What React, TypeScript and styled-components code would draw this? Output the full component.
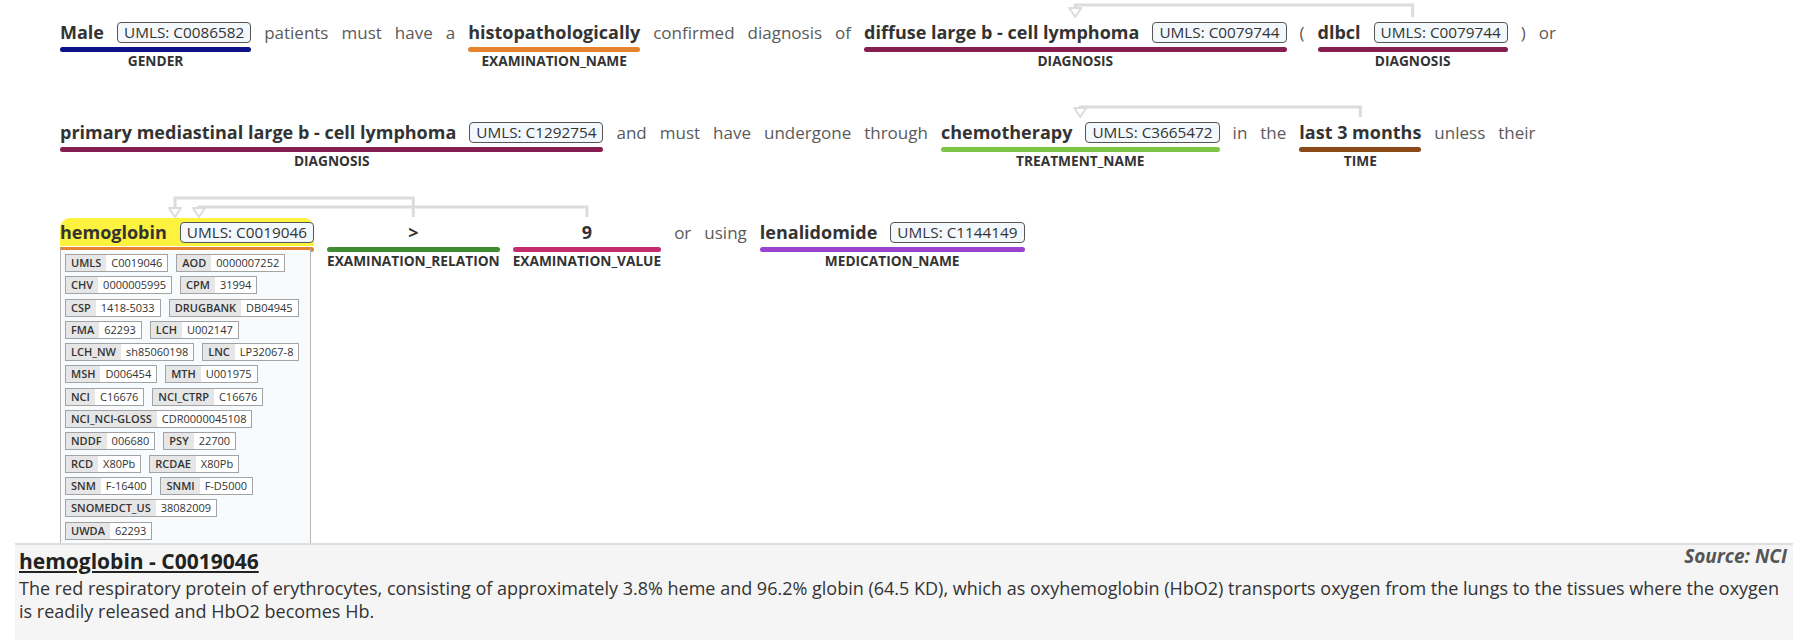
import { FC, Fragment, useLayoutEffect, useRef, useState } from 'react';
import styled, { createGlobalStyle } from 'styled-components';

type EntityToken = {
  id?: string;
  text: string;
  code?: string;
  label: string;
  color: string;
  selected?: boolean;
};

type Token = string | EntityToken;

type Relation = { from: string; to: string; rise: number; offset: number };

type Arc = { x1: number; x2: number; top: number; bottom: number };

const ORANGE = '#e5832e';
const MAROON = '#861f50';

const LINES: Token[][] = [
  [
    { text: 'Male', code: 'C0086582', label: 'GENDER', color: '#0c1388' },
    'patients',
    'must',
    'have',
    'a',
    { text: 'histopathologically', label: 'EXAMINATION_NAME', color: ORANGE },
    'confirmed',
    'diagnosis',
    'of',
    {
      id: 'dlbclFull',
      text: 'diffuse large b - cell lymphoma',
      code: 'C0079744',
      label: 'DIAGNOSIS',
      color: MAROON,
    },
    '(',
    { id: 'dlbcl', text: 'dlbcl', code: 'C0079744', label: 'DIAGNOSIS', color: MAROON },
    ')',
    'or',
  ],
  [
    {
      text: 'primary mediastinal large b - cell lymphoma',
      code: 'C1292754',
      label: 'DIAGNOSIS',
      color: MAROON,
    },
    'and',
    'must',
    'have',
    'undergone',
    'through',
    { id: 'chemo', text: 'chemotherapy', code: 'C3665472', label: 'TREATMENT_NAME', color: '#7ec446' },
    'in',
    'the',
    { id: 'last3', text: 'last 3 months', label: 'TIME', color: '#8b4a17' },
    'unless',
    'their',
  ],
  [
    {
      id: 'hemo',
      text: 'hemoglobin',
      code: 'C0019046',
      label: 'EXAMINATION_NAME',
      color: ORANGE,
      selected: true,
    },
    { id: 'gt', text: '>', label: 'EXAMINATION_RELATION', color: '#3e8e2f' },
    { id: 'nine', text: '9', label: 'EXAMINATION_VALUE', color: '#c52b6f' },
    'or',
    'using',
    { text: 'lenalidomide', code: 'C1144149', label: 'MEDICATION_NAME', color: '#9b43cf' },
  ],
];

const RELATIONS: Relation[] = [
  { from: 'dlbcl', to: 'dlbclFull', rise: 17, offset: 0 },
  { from: 'last3', to: 'chemo', rise: 15, offset: 0 },
  { from: 'gt', to: 'hemo', rise: 24, offset: -12 },
  { from: 'nine', to: 'hemo', rise: 15, offset: 12 },
];

const CODES: [string, string][] = [
  ['UMLS', 'C0019046'],
  ['AOD', '0000007252'],
  ['CHV', '0000005995'],
  ['CPM', '31994'],
  ['CSP', '1418-5033'],
  ['DRUGBANK', 'DB04945'],
  ['FMA', '62293'],
  ['LCH', 'U002147'],
  ['LCH_NW', 'sh85060198'],
  ['LNC', 'LP32067-8'],
  ['MSH', 'D006454'],
  ['MTH', 'U001975'],
  ['NCI', 'C16676'],
  ['NCI_CTRP', 'C16676'],
  ['NCI_NCI-GLOSS', 'CDR0000045108'],
  ['NDDF', '006680'],
  ['PSY', '22700'],
  ['RCD', 'X80Pb'],
  ['RCDAE', 'X80Pb'],
  ['SNM', 'F-16400'],
  ['SNMI', 'F-D5000'],
  ['SNOMEDCT_US', '38082009'],
  ['UWDA', '62293'],
];

const App: FC = () => {
  const areaRef = useRef<HTMLDivElement>(null);
  const heads = useRef<Record<string, HTMLDivElement | null>>({});
  const [arcs, setArcs] = useState<Arc[]>([]);

  useLayoutEffect(() => {
    const measure = () => {
      if (!areaRef.current) return;
      const base = areaRef.current.getBoundingClientRect();
      const next = RELATIONS.map((r) => {
        const src = heads.current[r.from]!.getBoundingClientRect();
        const dst = heads.current[r.to]!.getBoundingClientRect();
        const headTop = src.top - base.top;
        return {
          x1: (src.left + src.right) / 2 - base.left,
          x2: (dst.left + dst.right) / 2 - base.left + r.offset,
          top: headTop - r.rise,
          bottom: headTop - 5,
        };
      });
      setArcs(next);
    };
    measure();
    document.fonts?.ready.then(measure);
  }, []);

  return (
    <Page>
      <GlobalStyle />
      <TextArea ref={areaRef}>
        {LINES.map((line, i) => (
          <Line key={i}>
            {line.map((tok, j) =>
              typeof tok === 'string' ? (
                <Word key={j}>{tok}</Word>
              ) : (
                <EntityBox key={j}>
                  <Head
                    $selected={tok.selected}
                    ref={(el) => {
                      if (tok.id) heads.current[tok.id] = el;
                    }}
                  >
                    <EntityText>{tok.text}</EntityText>
                    {tok.code && <Badge>UMLS: {tok.code}</Badge>}
                  </Head>
                  <Bar $color={tok.color} />
                  <Label>{tok.label}</Label>
                  {tok.selected && (
                    <Dropdown $color={tok.color}>
                      {CODES.map(([k, v]) => (
                        <Chip key={k}>
                          <ChipKey>{k}</ChipKey>
                          <ChipValue>{v}</ChipValue>
                        </Chip>
                      ))}
                    </Dropdown>
                  )}
                </EntityBox>
              )
            )}
          </Line>
        ))}
        <ArcLayer>
          {arcs.map((a, i) => (
            <Fragment key={i}>
              <path
                d={`M${a.x1},${a.bottom} V${a.top} H${a.x2} V${a.bottom - 9}`}
                fill="none"
                stroke="#dcdcdc"
                strokeWidth={3}
              />
              <polygon
                points={`${a.x2 - 6},${a.bottom - 9} ${a.x2 + 6},${a.bottom - 9} ${a.x2},${a.bottom}`}
                fill="#fff"
                stroke="#dcdcdc"
                strokeWidth={2}
                strokeLinejoin="round"
              />
            </Fragment>
          ))}
        </ArcLayer>
      </TextArea>

      <InfoPanel>
        <InfoHeader>
          <InfoTitle>hemoglobin - C0019046</InfoTitle>
          <InfoSource>Source: NCI</InfoSource>
        </InfoHeader>
        <InfoText>
          The red respiratory protein of erythrocytes, consisting of approximately 3.8% heme and
          96.2% globin (64.5 KD), which as oxyhemoglobin (HbO2) transports oxygen from the lungs to
          the tissues where the oxygen is readily released and HbO2 becomes Hb.
        </InfoText>
      </InfoPanel>
    </Page>
  );
};

const GlobalStyle = createGlobalStyle`
  body {
    margin: 0;
    background: #fff;
    font-family: 'Open Sans', 'Noto Sans', sans-serif;
  }
`;

const Page = styled.div`
  width: 1814px;
  height: 640px;
  overflow: hidden;
`;

const TextArea = styled.div`
  position: relative;
  height: 543px;
  box-sizing: border-box;
  padding-left: 60px;
  overflow: hidden;
`;

const Line = styled.div`
  display: flex;
  align-items: flex-start;
  column-gap: 13px;
  height: 100px;
  padding-top: 22px;
  box-sizing: border-box;
`;

const Word = styled.span`
  font-size: 17px;
  line-height: 21px;
  color: #5a5a5a;
  white-space: nowrap;
`;

const EntityBox = styled.div`
  position: relative;
  display: inline-flex;
  flex-direction: column;
  align-items: stretch;
`;

const Head = styled.div<{ $selected?: boolean }>`
  display: flex;
  align-items: center;
  justify-content: center;
  gap: 13px;
  height: 21px;
  ${({ $selected }) =>
    $selected &&
    `
    background: #fdf23d;
    border-radius: 10px 10px 0 0;
    padding: 4px 0 3px;
    margin: -4px 0 -3px;
  `}
`;

const EntityText = styled.span`
  font-size: 18px;
  line-height: 21px;
  font-weight: 700;
  color: #333;
  white-space: nowrap;
`;

const Badge = styled.span`
  font-size: 15.3px;
  line-height: 19px;
  padding: 0 6px;
  border: 1px solid #555;
  border-radius: 4px;
  background: #f3f8fd;
  color: #333;
  white-space: nowrap;
`;

const Bar = styled.div<{ $color: string }>`
  height: 5px;
  margin-top: 4px;
  border-radius: 3px;
  background: ${({ $color }) => $color};
`;

const Label = styled.div`
  margin-top: 2px;
  font-size: 13.7px;
  line-height: 14px;
  font-weight: 700;
  color: #333;
  text-align: center;
  white-space: nowrap;
`;

const Dropdown = styled.div<{ $color: string }>`
  position: absolute;
  z-index: 2;
  top: 25px;
  left: 0;
  width: 251px;
  height: 320px;
  box-sizing: border-box;
  display: flex;
  flex-wrap: wrap;
  align-content: flex-start;
  column-gap: 8px;
  row-gap: 4.3px;
  padding: 4px 4px;
  background: #f8fbfe;
  border: 1px solid #b4b4b4;
  border-top: 3px solid ${({ $color }) => $color};
  border-radius: 0 2px 0 0;
`;

const Chip = styled.span`
  display: inline-flex;
  height: 18px;
  box-sizing: border-box;
  border: 1px solid #a3a3a3;
  font-size: 11px;
  line-height: 16px;
  color: #333;
`;

const ChipKey = styled.span`
  padding: 0 5px;
  background: #e6e6e6;
  font-weight: 600;
`;

const ChipValue = styled.span`
  padding: 0 5px;
  background: #fff;
`;

const ArcLayer = styled.svg`
  position: absolute;
  inset: 0;
  width: 100%;
  height: 100%;
  pointer-events: none;
  overflow: visible;
`;

const InfoPanel = styled.div`
  margin: 0 21px 0 15px;
  min-height: 97px;
  box-sizing: border-box;
  padding: 2px 6px 20px 4px;
  border-top: 2px solid #dedede;
  background: #f5f5f5;
  color: #333;
`;

const InfoHeader = styled.div`
  display: flex;
  justify-content: space-between;
  align-items: flex-start;
`;

const InfoTitle = styled.span`
  margin-top: 2px;
  font-size: 21px;
  line-height: 24px;
  font-weight: 700;
  color: #222;
  text-decoration: underline;
`;

const InfoSource = styled.span`
  margin-top: -1px;
  font-size: 19px;
  line-height: 20px;
  font-weight: 700;
  font-style: italic;
  color: #555;
`;

const InfoText = styled.p`
  margin: 4px 0 0;
  font-size: 18px;
  line-height: 23px;
  color: #333;
`;

export default App;
